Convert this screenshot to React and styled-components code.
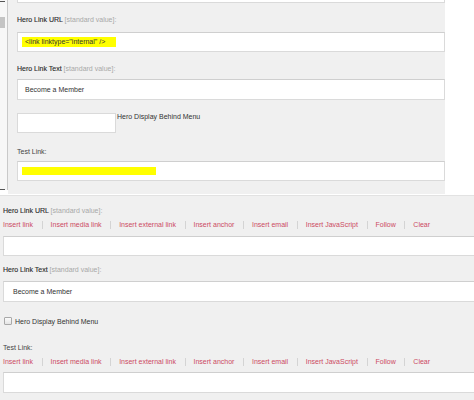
import React from "react";
import styled, { createGlobalStyle } from "styled-components";

const GlobalStyle = createGlobalStyle`
  html, body { margin: 0; padding: 0; background: #ffffff; }
  body { font-family: "Liberation Sans", Arial, sans-serif; }
`;

const Page = styled.div`
  width: 474px;
  height: 400px;
  overflow: hidden;
  background: #ffffff;
  display: flex;
  flex-direction: column;
`;

/* ---------- top (old) screenshot ---------- */
const OldShot = styled.div`
  display: flex;
  height: 195px;
  flex-shrink: 0;
`;

const Gutter = styled.div`
  width: 7px;
  background: #f7f7f7;
  border-right: 1px solid #c9c9c9;
  display: flex;
  flex-direction: column;
  height: 190px;
`;

const ArrowMark = styled.div`
  width: 5px;
  height: 1px;
  background: #555;
  margin-top: ${(p) => p.$top || 0}px;
`;

const Thumb = styled.div`
  width: 5px;
  height: 11px;
  background: #c4c4c4;
  margin-top: 15px;
`;

const Spacer = styled.div`
  flex: 1;
`;

const OldPanel = styled.div`
  width: 428px;
  padding-left: 9px;
  background: #f0f0f0;
  display: flex;
  flex-direction: column;
  height: 194px;
`;

const Blank = styled.div`
  flex: 1;
  background: #ffffff;
`;

const Label = styled.div`
  font-size: 7px;
  line-height: 10px;
  color: #333;
  white-space: nowrap;
  margin-top: ${(p) => p.$mt}px;
  margin-bottom: ${(p) => p.$mb}px;
`;

const FieldName = styled.span`
  color: ${(p) => (p.$strong ? "#2a2a2a" : "#444")};
  -webkit-text-stroke: ${(p) => (p.$strong ? "0.12px #2a2a2a" : "0")};
`;

const Std = styled.span`
  color: #a8a8a8;
`;

const Input = styled.div`
  box-sizing: border-box;
  height: ${(p) => p.$h || 20}px;
  background: #ffffff;
  border: 1px solid #dadada;
  border-top-color: #cfcfcf;
  display: flex;
  align-items: center;
  padding-left: ${(p) => p.$pl || 7}px;
  font-size: 7px;
  color: #333;
  white-space: nowrap;
`;

const TopStub = styled.div`
  height: 3px;
  background: #ffffff;
  border: 1px solid #dadada;
  border-top: none;
  box-sizing: border-box;
`;

const Highlight = styled.span`
  background: #ffff00;
  display: inline-block;
  height: ${(p) => p.$h}px;
  width: ${(p) => p.$w}px;
  line-height: ${(p) => p.$h}px;
  padding-left: 3px;
  box-sizing: border-box;
  font-size: 7px;
  color: #333;
`;

const OldCheckRow = styled.div`
  display: flex;
  align-items: flex-start;
  margin-top: 13px;
`;

const OldCheckBox = styled.div`
  width: 99px;
  height: 20px;
  box-sizing: border-box;
  background: #fff;
  border: 1px solid #dadada;
`;

const OldCheckText = styled.span`
  font-size: 7px;
  line-height: 10px;
  color: #333;
  margin-left: 1px;
  margin-top: -1px;
`;

/* ---------- bottom (new) screenshot ---------- */
const NewShot = styled.div`
  flex: 1;
  background: #f0f0f0;
  border-top: 1px solid #e2e2e2;
  padding-left: 3px;
  padding-top: 10px;
  display: flex;
  flex-direction: column;
`;

const WideInput = styled(Input)`
  border-right: none;
  margin-top: ${(p) => p.$mt}px;
  padding-left: 9px;
`;

const LinkRow = styled.div`
  display: flex;
  align-items: center;
  height: 10px;
  margin-top: ${(p) => p.$mt}px;
  white-space: nowrap;
`;

const LinkItem = styled.span`
  font-size: 7px;
  line-height: 10px;
  color: #cc4a63;
`;

const Sep = styled.span`
  width: 1px;
  height: 8px;
  background: #d4d4d4;
  margin: 0 8px 0 8.6px;
`;

const CheckRow = styled.div`
  display: flex;
  align-items: center;
  height: 10px;
  margin-top: 14px;
  padding-left: 1px;
`;

const Box = styled.span`
  width: 8px;
  height: 8px;
  box-sizing: border-box;
  border: 1px solid #a9a9a9;
  border-radius: 1px;
  background: linear-gradient(#fbfbfb, #e4e4e4);
  margin-right: 3px;
`;

const CheckText = styled.span`
  font-size: 7px;
  color: #333;
`;

const links = [
  "Insert link",
  "Insert media link",
  "Insert external link",
  "Insert anchor",
  "Insert email",
  "Insert JavaScript",
  "Follow",
  "Clear",
];

function Links({ mt }) {
  return (
    <LinkRow $mt={mt}>
      {links.map((l, i) => (
        <React.Fragment key={l}>
          {i > 0 && <Sep />}
          <LinkItem>{l}</LinkItem>
        </React.Fragment>
      ))}
    </LinkRow>
  );
}

export default function App() {
  return (
    <Page>
      <GlobalStyle />
      <OldShot>
        <Gutter>
          <ArrowMark $top={1} />
          <Thumb />
          <Spacer />
          <ArrowMark />
        </Gutter>
        <OldPanel>
          <TopStub />
          <Label $mt={12} $mb={7}>
            <FieldName $strong>Hero Link URL</FieldName> <Std>[standard value]:</Std>
          </Label>
          <Input $pl={4}>
            <Highlight $w={94} $h={10}>&lt;link linktype="internal" /&gt;</Highlight>
          </Input>
          <Label $mt={12} $mb={5}>
            <FieldName $strong>Hero Link Text</FieldName> <Std>[standard value]:</Std>
          </Label>
          <Input $h={21}>Become a Member</Input>
          <OldCheckRow>
            <OldCheckBox />
            <OldCheckText>Hero Display Behind Menu</OldCheckText>
          </OldCheckRow>
          <Label $mt={14} $mb={4}>
            <FieldName>Test Link:</FieldName>
          </Label>
          <Input $pl={4}>
            <Highlight $w={134} $h={8} />
          </Input>
        </OldPanel>
        <Blank />
      </OldShot>
      <NewShot>
        <Label $mt={0} $mb={0}>
          <FieldName $strong>Hero Link URL</FieldName> <Std>[standard value]:</Std>
        </Label>
        <Links mt={4} />
        <WideInput $mt={6} $h={20} />
        <Label $mt={9} $mb={0}>
          <FieldName $strong>Hero Link Text</FieldName> <Std>[standard value]:</Std>
        </Label>
        <WideInput $mt={6} $h={21}>Become a Member</WideInput>
        <CheckRow>
          <Box />
          <CheckText>Hero Display Behind Menu</CheckText>
        </CheckRow>
        <Label $mt={17} $mb={0}>
          <FieldName>Test Link:</FieldName>
        </Label>
        <Links mt={4} />
        <WideInput $mt={5} $h={21} />
      </NewShot>
    </Page>
  );
}
